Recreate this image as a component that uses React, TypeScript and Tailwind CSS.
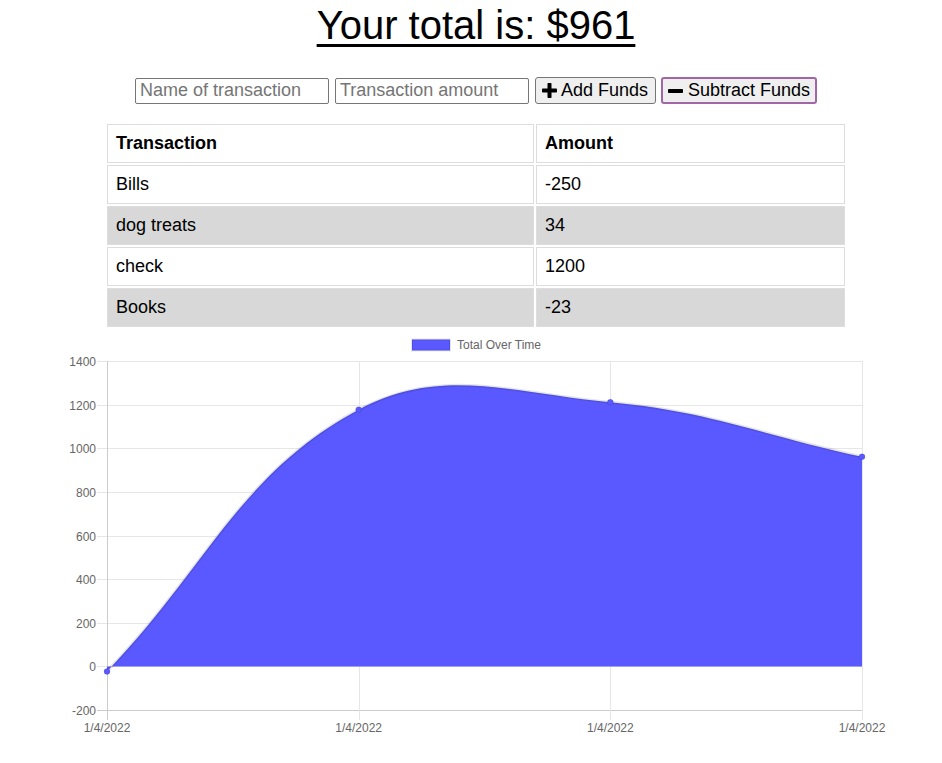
import React from "react";

const transactions = [
  { name: "Bills", value: -250 },
  { name: "dog treats", value: 34 },
  { name: "check", value: 1200 },
  { name: "Books", value: -23 },
];

// chart area in page coordinates
const LEFT = 107;
const RIGHT = 862;
const TOP = 361;
const BOTTOM = 710;
const MIN = -200;
const MAX = 1400;
const TENSION = 0.4;
const FILL = "#5959ff";
const GRID = "#e6e6e6";

const yOf = (v: number) => BOTTOM - ((v - MIN) / (MAX - MIN)) * (BOTTOM - TOP);

type Pt = { x: number; y: number };

function buildCurve(values: number[]) {
  const step = (RIGHT - LEFT) / (values.length - 1);
  const pts: Pt[] = values.map((v, i) => ({ x: LEFT + i * step, y: yOf(v) }));
  const clampY = (y: number) => Math.min(BOTTOM, Math.max(TOP, y));

  const ctrl = pts.map((cur, i) => {
    const prev = pts[i - 1] ?? cur;
    const next = pts[i + 1] ?? cur;
    const d01 = Math.hypot(cur.x - prev.x, cur.y - prev.y);
    const d12 = Math.hypot(next.x - cur.x, next.y - cur.y);
    const s01 = d01 / (d01 + d12) || 0;
    const s12 = d12 / (d01 + d12) || 0;
    const fa = TENSION * s01;
    const fb = TENSION * s12;
    return {
      prev: { x: cur.x - fa * (next.x - prev.x), y: clampY(cur.y - fa * (next.y - prev.y)) },
      next: { x: cur.x + fb * (next.x - prev.x), y: clampY(cur.y + fb * (next.y - prev.y)) },
    };
  });

  let d = `M ${pts[0].x} ${pts[0].y}`;
  for (let i = 1; i < pts.length; i++) {
    const a = ctrl[i - 1].next;
    const b = ctrl[i].prev;
    d += ` C ${a.x} ${a.y} ${b.x} ${b.y} ${pts[i].x} ${pts[i].y}`;
  }
  const zero = yOf(0);
  const area = `${d} L ${RIGHT} ${zero} L ${LEFT} ${zero} Z`;
  return { pts, line: d, area };
}

const PlusIcon = () => (
  <svg width={15} height={15} viewBox="0 0 15 15" className="shrink-0">
    <rect x={0} y={5.5} width={15} height={4} rx={0.8} fill="currentColor" />
    <rect x={5.5} y={0} width={4} height={15} rx={0.8} fill="currentColor" />
  </svg>
);

const MinusIcon = () => (
  <svg width={15} height={14} viewBox="0 0 15 14" className="shrink-0">
    <rect x={0} y={5} width={15} height={4} rx={0.8} fill="currentColor" />
  </svg>
);

function TotalChart() {
  // running total, oldest transaction first
  const totals: number[] = [];
  let sum = 0;
  [...transactions].reverse().forEach((t) => {
    sum += t.value;
    totals.push(sum);
  });
  const { pts, line, area } = buildCurve(totals);
  const ticks = [1400, 1200, 1000, 800, 600, 400, 200, 0, -200];

  return (
    <svg
      width={942}
      height={434}
      viewBox="0 329 942 434"
      className="block font-['Liberation_Sans',Arial,sans-serif]"
    >
      {/* legend */}
      <rect x={412} y={339.5} width={38} height={11} fill={FILL} stroke="rgba(0,0,0,0.1)" strokeWidth={2} />
      <text x={457} y={349} fontSize={12} fill="#666">
        Total Over Time
      </text>

      {/* horizontal grid + y labels */}
      {ticks.map((t) => {
        const y = Math.round(yOf(t)) + 0.5;
        return (
          <g key={t}>
            <line
              x1={97}
              x2={RIGHT}
              y1={y}
              y2={y}
              stroke={t === -200 ? "#cccccc" : GRID}
              strokeWidth={1}
            />
            <text x={96} y={y + 4} fontSize={12} fill="#666" textAnchor="end">
              {t}
            </text>
          </g>
        );
      })}

      {/* vertical grid + x labels */}
      {pts.map((p, i) => {
        const x = Math.round(p.x) + 0.5;
        return (
          <g key={i}>
            <line
              x1={x}
              x2={x}
              y1={TOP}
              y2={BOTTOM + 10}
              stroke={i === 0 ? "#cccccc" : GRID}
              strokeWidth={1}
            />
            <text x={p.x} y={732} fontSize={12} fill="#666" textAnchor="middle">
              1/4/2022
            </text>
          </g>
        );
      })}

      {/* dataset */}
      <path d={area} fill={FILL} />
      <path d={line} fill="none" stroke="rgba(0,0,0,0.1)" strokeWidth={3} />
      {pts.map((p, i) => (
        <circle key={i} cx={p.x} cy={p.y} r={3} fill={FILL} stroke="rgba(0,0,0,0.1)" strokeWidth={1} />
      ))}
    </svg>
  );
}

export default function App() {
  return (
    <div className="min-h-[763px] bg-white text-black font-['Liberation_Sans',Arial,sans-serif]">
      <div className="pl-[10px]">
        <h1 className="pt-[2px] text-center text-[40px] leading-[46px] underline decoration-[3px] underline-offset-[5px]">
          Your total is: $961
        </h1>

        <div className="mt-[29px] flex items-center justify-center gap-[6px]">
          <input
            type="text"
            placeholder="Name of transaction"
            className="h-[26px] w-[194px] rounded-[2px] border border-[#767676] px-[4px] text-[18px] placeholder:text-[#757575]"
          />
          <input
            type="number"
            placeholder="Transaction amount"
            className="h-[26px] w-[194px] rounded-[2px] border border-[#767676] px-[4px] text-[18px] placeholder:text-[#757575]"
          />
          <button className="flex h-[27px] items-center gap-[4px] rounded-[3px] border border-[#767676] bg-[#efefef] pl-[6px] pr-[7px] text-[18px]">
            <PlusIcon />
            Add Funds
          </button>
          <button className="-ml-[1px] flex h-[27px] items-center gap-[5px] rounded-[3px] border-2 border-[#a266a6] bg-[#efefef] pl-[5px] pr-[5px] text-[18px]">
            <MinusIcon />
            Subtract Funds
          </button>
        </div>

        <table className="mx-auto mt-[18px] border-separate border-spacing-[2px] text-left text-[18px] leading-[21px]">
          <thead>
            <tr>
              <th className="w-[427px] border border-[#dddddd] px-[8px] py-[8px] font-bold">Transaction</th>
              <th className="w-[309px] border border-[#dddddd] px-[8px] py-[8px] font-bold">Amount</th>
            </tr>
          </thead>
          <tbody>
            {transactions.map((t, i) => (
              <tr key={t.name} className={i % 2 === 1 ? "bg-[#d8d8d8]" : "bg-white"}>
                <td className="border border-[#dddddd] px-[8px] py-[8px]">{t.name}</td>
                <td className="border border-[#dddddd] px-[8px] py-[8px]">{t.value}</td>
              </tr>
            ))}
          </tbody>
        </table>
      </div>

      <TotalChart />
    </div>
  );
}
